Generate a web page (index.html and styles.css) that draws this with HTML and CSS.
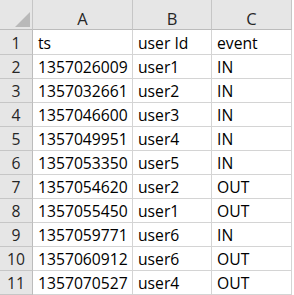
FILE: index.html
```html
<!DOCTYPE html>
<html>
<head>
<meta charset="utf-8">
<link rel="stylesheet" href="styles.css">
</head>
<body>
<div class="sheet">
  <div class="corner"><svg class="tri" width="15" height="15" viewBox="0 0 15 15"><polygon points="15,0 15,15 0,15" fill="#b9b9b9"/></svg></div>
  <div class="colhead">A</div>
  <div class="colhead">B</div>
  <div class="colhead">C</div>

  <div class="rowhead">1</div><div class="cell">ts</div><div class="cell">user Id</div><div class="cell">event</div>
  <div class="rowhead">2</div><div class="cell">1357026009</div><div class="cell">user1</div><div class="cell">IN</div>
  <div class="rowhead">3</div><div class="cell">1357032661</div><div class="cell">user2</div><div class="cell">IN</div>
  <div class="rowhead">4</div><div class="cell">1357046600</div><div class="cell">user3</div><div class="cell">IN</div>
  <div class="rowhead">5</div><div class="cell">1357049951</div><div class="cell">user4</div><div class="cell">IN</div>
  <div class="rowhead">6</div><div class="cell">1357053350</div><div class="cell">user5</div><div class="cell">IN</div>
  <div class="rowhead">7</div><div class="cell">1357054620</div><div class="cell">user2</div><div class="cell">OUT</div>
  <div class="rowhead">8</div><div class="cell">1357055450</div><div class="cell">user1</div><div class="cell">OUT</div>
  <div class="rowhead">9</div><div class="cell">1357059771</div><div class="cell">user6</div><div class="cell">IN</div>
  <div class="rowhead">10</div><div class="cell">1357060912</div><div class="cell">user6</div><div class="cell">OUT</div>
  <div class="rowhead">11</div><div class="cell">1357070527</div><div class="cell">user4</div><div class="cell">OUT</div>
</div>
</body>
</html>
```
FILE: styles.css
```css
html, body {
  margin: 0;
  padding: 0;
  background: #ffffff;
}
body {
  width: 294px;
  height: 295px;
  overflow: hidden;
  font-family: "Open Sans", "Liberation Sans", sans-serif;
}
.sheet {
  display: grid;
  grid-template-columns: 33px 100px 79px 80px;
  grid-template-rows: 30px 25px repeat(10, 24px);
}
.corner, .colhead, .rowhead, .cell {
  box-sizing: border-box;
  display: flex;
  align-items: flex-end;
  font-size: 15.7px;
  line-height: 18px;
  white-space: nowrap;
  overflow: hidden;
}
.corner {
  background: #e6e6e6;
  border-right: 1px solid #c6c6c6;
  border-bottom: 1px solid #bcbcbc;
  justify-content: flex-end;
  padding: 0 2px 2px 0;
}
.tri {
  display: block;
}
.colhead {
  background: #e6e6e6;
  border-right: 1px solid #c6c6c6;
  border-bottom: 1px solid #bcbcbc;
  justify-content: center;
  color: #262626;
  font-size: 16.5px;
  padding-bottom: 1px;
}
.rowhead {
  background: #e6e6e6;
  border-right: 1px solid #bcbcbc;
  border-bottom: 1px solid #c6c6c6;
  justify-content: center;
  color: #262626;
  padding-bottom: 2px;
}
.cell {
  background: #ffffff;
  border-right: 1px solid #d4d4d4;
  border-bottom: 1px solid #d4d4d4;
  color: #000000;
  padding: 0 0 2px 5px;
}
```
